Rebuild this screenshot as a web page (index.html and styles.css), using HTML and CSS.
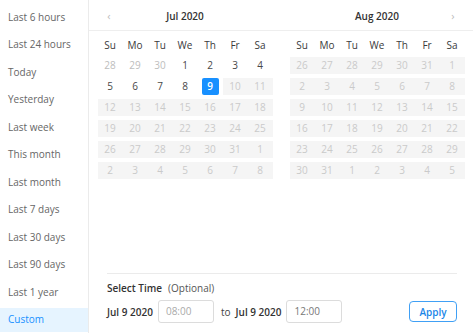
FILE: index.html
```html
<!DOCTYPE html>
<html lang="en">
<head>
<meta charset="utf-8">
<title>Date range picker</title>
<link rel="stylesheet" href="styles.css">
</head>
<body>
<div class="picker">
  <ul class="ranges">
    <li>Last 6 hours</li>
    <li>Last 24 hours</li>
    <li>Today</li>
    <li>Yesterday</li>
    <li>Last week</li>
    <li>This month</li>
    <li>Last month</li>
    <li>Last 7 days</li>
    <li>Last 30 days</li>
    <li>Last 90 days</li>
    <li>Last 1 year</li>
    <li class="active">Custom</li>
  </ul>
  <div class="main">
    <div class="calendars">
      <div class="cal">
        <div class="cal-head"><span class="nav">&lsaquo;</span><span class="title">Jul 2020</span><span class="nav"></span></div>
        <div class="grid">
          <span class="wd">Su</span><span class="wd">Mo</span><span class="wd">Tu</span><span class="wd">We</span><span class="wd">Th</span><span class="wd">Fr</span><span class="wd">Sa</span>
          <span class="d out">28</span><span class="d out">29</span><span class="d out">30</span><span class="d">1</span><span class="d">2</span><span class="d">3</span><span class="d">4</span>
          <span class="d">5</span><span class="d">6</span><span class="d">7</span><span class="d">8</span><span class="d sel"><b>9</b></span><span class="d off">10</span><span class="d off">11</span>
          <span class="d off">12</span><span class="d off">13</span><span class="d off">14</span><span class="d off">15</span><span class="d off">16</span><span class="d off">17</span><span class="d off">18</span>
          <span class="d off">19</span><span class="d off">20</span><span class="d off">21</span><span class="d off">22</span><span class="d off">23</span><span class="d off">24</span><span class="d off">25</span>
          <span class="d off">26</span><span class="d off">27</span><span class="d off">28</span><span class="d off">29</span><span class="d off">30</span><span class="d off">31</span><span class="d off">1</span>
          <span class="d off">2</span><span class="d off">3</span><span class="d off">4</span><span class="d off">5</span><span class="d off">6</span><span class="d off">7</span><span class="d off">8</span>
        </div>
      </div>
      <div class="cal">
        <div class="cal-head"><span class="nav"></span><span class="title">Aug 2020</span><span class="nav">&rsaquo;</span></div>
        <div class="grid">
          <span class="wd">Su</span><span class="wd">Mo</span><span class="wd">Tu</span><span class="wd">We</span><span class="wd">Th</span><span class="wd">Fr</span><span class="wd">Sa</span>
          <span class="d off">26</span><span class="d off">27</span><span class="d off">28</span><span class="d off">29</span><span class="d off">30</span><span class="d off">31</span><span class="d off">1</span>
          <span class="d off">2</span><span class="d off">3</span><span class="d off">4</span><span class="d off">5</span><span class="d off">6</span><span class="d off">7</span><span class="d off">8</span>
          <span class="d off">9</span><span class="d off">10</span><span class="d off">11</span><span class="d off">12</span><span class="d off">13</span><span class="d off">14</span><span class="d off">15</span>
          <span class="d off">16</span><span class="d off">17</span><span class="d off">18</span><span class="d off">19</span><span class="d off">20</span><span class="d off">21</span><span class="d off">22</span>
          <span class="d off">23</span><span class="d off">24</span><span class="d off">25</span><span class="d off">26</span><span class="d off">27</span><span class="d off">28</span><span class="d off">29</span>
          <span class="d off">30</span><span class="d off">31</span><span class="d off">1</span><span class="d off">2</span><span class="d off">3</span><span class="d off">4</span><span class="d off">5</span>
        </div>
      </div>
    </div>
    <div class="time">
      <div class="time-title"><strong>Select Time</strong><span class="opt">(Optional)</span></div>
      <div class="time-row">
        <strong>Jul 9 2020</strong>
        <span class="input light">08:00</span>
        <span class="to">to</span>
        <strong>Jul 9 2020</strong>
        <span class="input">12:00</span>
        <button class="apply">Apply</button>
      </div>
    </div>
  </div>
</div>
</body>
</html>
```

FILE: styles.css
```css
* { box-sizing: border-box; }
html, body { margin: 0; padding: 0; background: #fff; }
body {
  font-family: "Open Sans", "Liberation Sans", sans-serif;
  font-size: 10px;
  color: #333;
}
.picker {
  display: flex;
  width: 474px;
  height: 333px;
  overflow: hidden;
}
.ranges {
  list-style: none;
  margin: 0;
  padding: 5.5px 0 0;
  width: 89px;
  flex: 0 0 89px;
  border-right: 1px solid #ebebeb;
  display: flex;
  flex-direction: column;
  gap: 4px;
}
.ranges li {
  height: 23.5px;
  line-height: 23.5px;
  padding-left: 8px;
  color: #666;
  flex: 0 0 auto;
}
.ranges li.active {
  background: #e6f4ff;
  color: #1890ff;
}
.main {
  flex: 1;
  display: flex;
  flex-direction: column;
}
.calendars { display: flex; }
.cal { flex: 0 0 192px; }
.cal-head {
  height: 31px;
  border-bottom: 1px solid #eeeeee;
  display: flex;
  align-items: center;
  justify-content: space-between;
  padding: 1px 15px 0 15px;
}
.cal-head .title { font-weight: 600; color: #333; }
.cal-head .nav {
  width: 10px;
  color: #bbb;
  font-size: 11px;
  text-align: center;
}
.grid {
  display: grid;
  grid-template-columns: repeat(7, 25px);
  grid-auto-rows: 17px;
  row-gap: 3.85px;
  justify-content: center;
  padding-top: 5.65px;
}
.wd, .d {
  text-align: center;
  line-height: 17px;
}
.wd { color: #3a3a3a; }
.d { color: #484848; }
.d.out { color: #bdbdbd; }
.d.off { background: #f5f5f5; color: #cacaca; }
.d.sel { display: flex; justify-content: center; }
.d.sel b {
  width: 17px;
  height: 17px;
  background: #1890ff;
  color: #fff;
  border-radius: 2px;
  font-weight: 600;
}
.time {
  margin: auto 17px 0 18px;
  border-top: 1px solid #ebebeb;
  padding-bottom: 10px;
}
.time-title {
  margin-top: 7px;
  line-height: 14px;
  color: #333;
}
.time-title strong { font-weight: 600; }
.time-title .opt { margin-left: 6px; color: #555; }
.time-row {
  margin-top: 5px;
  display: flex;
  align-items: center;
  height: 23px;
}
.time-row strong { font-weight: 600; color: #333; }
.input {
  width: 56px;
  height: 23px;
  border: 1px solid #dcdcdc;
  border-radius: 3px;
  line-height: 21px;
  padding-left: 7px;
  color: #777;
  margin-left: 5px;
}
.input.light { color: #aaa; }
.to { margin: 0 5px 0 7px; color: #444; }
.apply {
  margin-left: auto;
  width: 48px;
  height: 21px;
  border: 1px solid #40a0f5;
  border-radius: 4px;
  background: #fff;
  color: #1a86e8;
  font-family: inherit;
  font-size: 10px;
  font-weight: 600;
  padding: 0;
}
```
